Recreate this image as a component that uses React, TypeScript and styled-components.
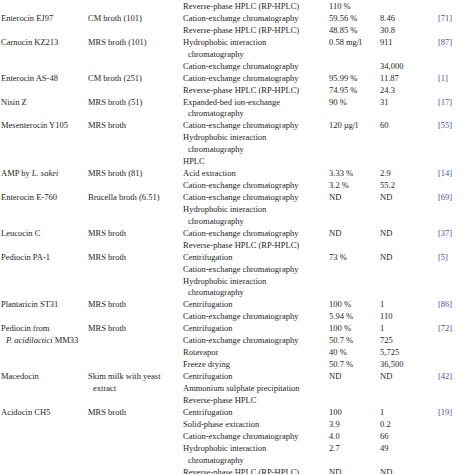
import React from "react";
import styled, { createGlobalStyle } from "styled-components";

type Step = [string | string[], string?, string?];

interface Group {
  name?: React.ReactNode;
  medium?: React.ReactNode;
  ref?: string;
  steps: Step[];
}

const HIC = ["Hydrophobic interaction", "chromatography"];
const CEX = "Cation-exchange chromatography";
const RP = "Reverse-phase HPLC (RP-HPLC)";

const groups: Group[] = [
  { steps: [[RP, "110 %"]] },
  {
    name: "Enterocin EJ97",
    medium: "CM broth (101)",
    ref: "[71]",
    steps: [
      [CEX, "59.56 %", "8.46"],
      [RP, "48.85 %", "30.8"],
    ],
  },
  {
    name: "Carnocin KZ213",
    medium: "MRS broth (101)",
    ref: "[87]",
    steps: [
      [HIC, "0.58 mg/l", "911"],
      [CEX, "", "34,000"],
    ],
  },
  {
    name: "Enterocin AS-48",
    medium: "CM broth (251)",
    ref: "[1]",
    steps: [
      [CEX, "95.99 %", "11.87"],
      [RP, "74.95 %", "24.3"],
    ],
  },
  {
    name: "Nisin Z",
    medium: "MRS broth (51)",
    ref: "[17]",
    steps: [[["Expanded-bed ion-exchange", "chromatography"], "90 %", "31"]],
  },
  {
    name: "Mesenterocin Y105",
    medium: "MRS broth",
    ref: "[55]",
    steps: [[CEX, "120 µg/l", "60"], [HIC], ["HPLC"]],
  },
  {
    name: (
      <>
        AMP by <i>L. sakei</i>
      </>
    ),
    medium: "MRS broth (81)",
    ref: "[14]",
    steps: [
      ["Acid extraction", "3.33 %", "2.9"],
      [CEX, "3.2 %", "55.2"],
    ],
  },
  {
    name: "Enterocin E-760",
    medium: "Brucella broth (6.51)",
    ref: "[69]",
    steps: [[CEX, "ND", "ND"], [HIC]],
  },
  {
    name: "Leucocin C",
    medium: "MRS broth",
    ref: "[37]",
    steps: [[CEX, "ND", "ND"], [RP]],
  },
  {
    name: "Pediocin PA-1",
    medium: "MRS broth",
    ref: "[5]",
    steps: [["Centrifugation", "73 %", "ND"], [CEX], [HIC]],
  },
  {
    name: "Plantaricin ST31",
    medium: "MRS broth",
    ref: "[86]",
    steps: [
      ["Centrifugation", "100 %", "1"],
      [CEX, "5.94 %", "110"],
    ],
  },
  {
    name: (
      <>
        Pediocin from
        <br />
        <i>P. acidilactici</i> MM33
      </>
    ),
    medium: "MRS broth",
    ref: "[72]",
    steps: [
      ["Centrifugation", "100 %", "1"],
      [CEX, "50.7 %", "725"],
      ["Rotavapor", "40 %", "5,725"],
      ["Freeze drying", "50.7 %", "36,500"],
    ],
  },
  {
    name: "Macedocin",
    medium: (
      <>
        Skim milk with yeast
        <br />
        extract
      </>
    ),
    ref: "[42]",
    steps: [
      ["Centrifugation", "ND", "ND"],
      ["Ammonium sulphate precipitation"],
      ["Reverse-phase HPLC"],
    ],
  },
  {
    name: "Acidocin CH5",
    medium: "MRS broth",
    ref: "[19]",
    steps: [
      ["Centrifugation", "100", "1"],
      ["Solid-phase extraction", "3.9", "0.2"],
      [CEX, "4.0", "66"],
      [HIC, "2.7", "49"],
      [RP, "ND", "ND"],
    ],
  },
];

// column widths, left edges at 1, 88, 183, 329, 380, 438
const colWidths = [87, 95, 146, 51, 58, 36];

const GlobalStyle = createGlobalStyle`
  html, body {
    margin: 0;
    padding: 0;
    background: #ffffff;
  }
`;

const Table = styled.table`
  margin-top: 1px;
  margin-left: 1px;
  border-collapse: collapse;
  table-layout: fixed;
  width: 473px;
  font-family: "Liberation Serif", "Times New Roman", serif;
  font-size: 8.5px;
  line-height: 11.67px;
  color: #1e1e1e;
`;

const Col = styled.col<{ $w: number }>`
  width: ${(p) => p.$w}px;
`;

const Cell = styled.td<{ $link?: boolean }>`
  padding: 0.17px 0 0.17px 5px;
  vertical-align: top;
  white-space: nowrap;
  text-indent: -5px;
  color: ${(p) => (p.$link ? "#4656a0" : "inherit")};
`;

function renderMethod(m: string | string[]) {
  if (typeof m === "string") return m;
  return (
    <>
      {m[0]}
      <br />
      {m[1]}
    </>
  );
}

export default function App() {
  return (
    <>
      <GlobalStyle />
      <Table>
        <colgroup>
          {colWidths.map((w, i) => (
            <Col key={i} $w={w} />
          ))}
        </colgroup>
        <tbody>
          {groups.map((g, gi) =>
            g.steps.map((s, si) => (
              <tr key={`${gi}-${si}`}>
                {si === 0 && (
                  <>
                    <Cell rowSpan={g.steps.length}>{g.name}</Cell>
                    <Cell rowSpan={g.steps.length}>{g.medium}</Cell>
                  </>
                )}
                <Cell>{renderMethod(s[0])}</Cell>
                <Cell>{s[1]}</Cell>
                <Cell>{s[2]}</Cell>
                {si === 0 && (
                  <Cell $link rowSpan={g.steps.length}>
                    {g.ref}
                  </Cell>
                )}
              </tr>
            ))
          )}
        </tbody>
      </Table>
    </>
  );
}
